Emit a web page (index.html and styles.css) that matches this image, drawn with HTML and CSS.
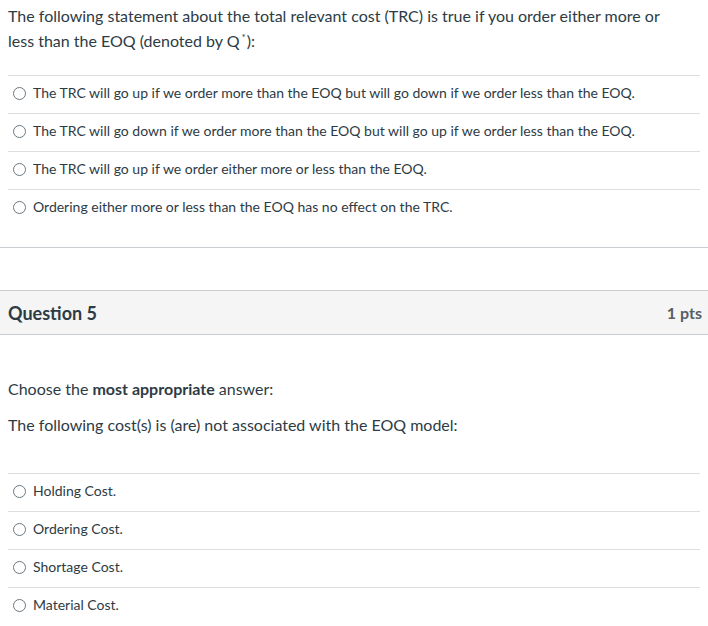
FILE: index.html
```html
<!DOCTYPE html>
<html>
<head>
<meta charset="utf-8">
<link rel="stylesheet" href="styles.css">
</head>
<body>
<div class="question">
  <div class="question-body">
    <p class="stem">The following statement about the total relevant cost (TRC) is true if you order either more or less than the EOQ (denoted by Q<sup>*</sup>):</p>
  </div>
  <div class="answers">
    <label class="answer"><span class="radio"></span>The TRC will go up if we order more than the EOQ but will go down if we order less than the EOQ.</label>
    <label class="answer"><span class="radio"></span>The TRC will go down if we order more than the EOQ but will go up if we order less than the EOQ.</label>
    <label class="answer"><span class="radio"></span>The TRC will go up if we order either more or less than the EOQ.</label>
    <label class="answer"><span class="radio"></span>Ordering either more or less than the EOQ has no effect on the TRC.</label>
  </div>
</div>

<div class="question q5">
  <div class="header">
    <span class="title">Question 5</span>
    <span class="pts">1 pts</span>
  </div>
  <div class="question-body body5">
    <p class="stem">Choose the <strong>most appropriate</strong> answer:</p>
    <p class="stem">The following cost(s) is (are) not associated with the EOQ model:</p>
  </div>
  <div class="answers">
    <label class="answer"><span class="radio"></span>Holding Cost.</label>
    <label class="answer"><span class="radio"></span>Ordering Cost.</label>
    <label class="answer"><span class="radio"></span>Shortage Cost.</label>
    <label class="answer"><span class="radio"></span>Material Cost.</label>
  </div>
</div>
</body>
</html>
```
FILE: styles.css
```css
html, body {
  margin: 0;
  padding: 0;
  background: #fff;
}
body {
  font-family: Lato, "Liberation Sans", sans-serif;
  color: #2d3b45;
  width: 708px;
}
.question {
  border-bottom: 1px solid #c7cdd1;
  padding-bottom: 20px;
}
.question-body {
  padding: 3px 30px 0 8px;
}
.stem {
  margin: 0;
  font-size: 16px;
  line-height: 25px;
}
.stem + .stem {
  margin-top: 11px;
}
.stem sup {
  font-size: 10px;
  line-height: 1;
  vertical-align: 6px;
  margin: 0 1px 0 2px;
}
.stem strong {
  font-weight: 700;
}
.answers {
  margin: 22px 8px 0;
}
.answer {
  display: flex;
  align-items: center;
  box-sizing: border-box;
  height: 38px;
  padding-bottom: 3px;
  border-top: 1px solid #dedede;
  font-size: 14px;
  line-height: 20px;
}
.radio {
  width: 11px;
  height: 11px;
  border: 1px solid #6b7780;
  border-radius: 50%;
  margin: 0 7px 0 5px;
  flex: none;
}
.q5 {
  margin-top: 42px;
  border-bottom: none;
}
.header {
  display: flex;
  justify-content: space-between;
  align-items: center;
  height: 43px;
  background: #f5f5f5;
  border-top: 1px solid #c7cdd1;
  border-bottom: 1px solid #c7cdd1;
  padding: 0 6px 0 8px;
}
.title {
  font-size: 18px;
  font-weight: 700;
}
.pts {
  font-size: 16px;
  font-weight: 700;
  color: #555f66;
}
.body5 {
  padding-top: 41px;
}
.body5 + .answers {
  margin-top: 36px;
}
```
